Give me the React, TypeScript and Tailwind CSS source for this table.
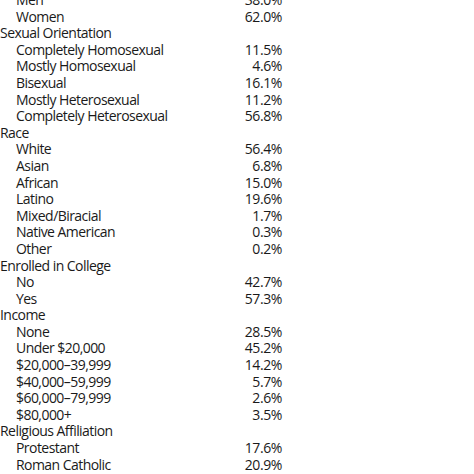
import React from 'react'

type Row = { label: string; value?: string; header?: boolean }

const rows: Row[] = [
    { label: 'Men', value: '38.0%' },
    { label: 'Women', value: '62.0%' },
    { label: 'Sexual Orientation', header: true },
    { label: 'Completely Homosexual', value: '11.5%' },
    { label: 'Mostly Homosexual', value: '4.6%' },
    { label: 'Bisexual', value: '16.1%' },
    { label: 'Mostly Heterosexual', value: '11.2%' },
    { label: 'Completely Heterosexual', value: '56.8%' },
    { label: 'Race', header: true },
    { label: 'White', value: '56.4%' },
    { label: 'Asian', value: '6.8%' },
    { label: 'African', value: '15.0%' },
    { label: 'Latino', value: '19.6%' },
    { label: 'Mixed/Biracial', value: '1.7%' },
    { label: 'Native American', value: '0.3%' },
    { label: 'Other', value: '0.2%' },
    { label: 'Enrolled in College', header: true },
    { label: 'No', value: '42.7%' },
    { label: 'Yes', value: '57.3%' },
    { label: 'Income', header: true },
    { label: 'None', value: '28.5%' },
    { label: 'Under $20,000', value: '45.2%' },
    { label: '$20,000–39,999', value: '14.2%' },
    { label: '$40,000–59,999', value: '5.7%' },
    { label: '$60,000–79,999', value: '2.6%' },
    { label: '$80,000+', value: '3.5%' },
    { label: 'Religious Affiliation', header: true },
    { label: 'Protestant', value: '17.6%' },
    { label: 'Roman Catholic', value: '20.9%' },
]

export default function App() {
    return (
        <div className="h-[474px] w-[474px] overflow-hidden bg-white">
            <div
                className="mt-[-8px] flex w-[282px] flex-col text-[14px] leading-[16.6px] tracking-[-0.55px] text-[#1a1a1a]"
                style={{ fontFamily: '"Open Sans", "Liberation Sans", sans-serif' }}
            >
                {rows.map((row) => (
                    <div key={row.label} className="flex h-[16.6px] items-center justify-between">
                        <span className={row.header ? 'pl-0' : 'pl-4'}>{row.label}</span>
                        <span className="tracking-[-0.4px]">{row.value ?? ''}</span>
                    </div>
                ))}
            </div>
        </div>
    )
}
